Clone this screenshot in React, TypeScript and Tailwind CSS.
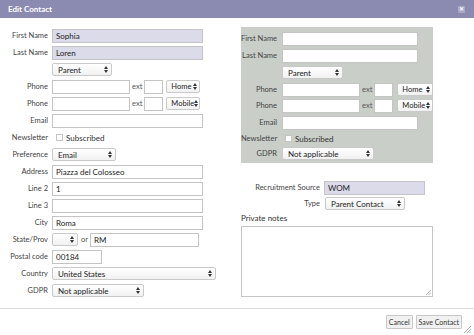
import React from "react";

const font = { fontFamily: "Lato, 'Open Sans', sans-serif" };

function Arrows() {
  return (
    <svg width="4" height="7" viewBox="0 0 4 7" className="shrink-0">
      <path d="M0 3 L2 0 L4 3 Z" fill="#333" />
      <path d="M0 4 L2 7 L4 4 Z" fill="#333" />
    </svg>
  );
}

function Input({ w, value, filled }: { w: string; value?: string; filled?: boolean }) {
  return (
    <div
      className={`${w} h-[14px] border border-[#c4c4c4] flex items-center px-[3px] text-[8px] text-[#222] shrink-0 ${
        filled ? "bg-[#dcdbea]" : "bg-white"
      }`}
    >
      {value}
    </div>
  );
}

function Select({ w, value, pad }: { w: string; value?: string; pad?: string }) {
  return (
    <div
      className={`${w} h-[13px] border border-[#c9c9c9] rounded-[2px] bg-gradient-to-b from-white to-[#f1f1f1] flex items-center justify-between ${
        pad ?? "pl-[5px] pr-[3px] text-[8px]"
      } text-[#222] shrink-0 overflow-hidden`}
    >
      <span className="whitespace-nowrap">{value}</span>
      <Arrows />
    </div>
  );
}

function Row({ label, lw, gap, children }: { label: string; lw: string; gap: string; children?: React.ReactNode }) {
  return (
    <div className={`h-[17px] flex items-center ${gap}`}>
      <div className={`${lw} text-right text-[7.5px] text-[#444] whitespace-nowrap shrink-0`}>{label}</div>
      {children}
    </div>
  );
}

function Phone({ type, iw, sw, sm }: { type: string; iw: string; sw: string; sm: string }) {
  return (
    <div className="flex items-center">
      <Input w={iw} />
      <span className="text-[7.5px] text-[#555] ml-[2px] mr-[2px]">ext</span>
      <Input w="w-[19px]" />
      <div className={sm}>
        <Select w={sw} value={type} pad="pl-[4px] pr-[2px] text-[7.5px]" />
      </div>
    </div>
  );
}

function Check() {
  return (
    <div className="flex items-center gap-[3px] ml-[4px]">
      <div className="w-[7px] h-[7px] border border-[#c4c4c4] bg-white" />
      <span className="text-[8px] text-[#333]">Subscribed</span>
    </div>
  );
}

export default function App() {
  const L = "w-[48px]";
  const G = "gap-[4px]";
  const RL = "w-[36px]";
  const RG = "gap-[5px]";
  return (
    <div className="w-[474px] h-[335px] bg-white relative overflow-hidden" style={font}>
      <div className="h-[18px] bg-[#8b8bb1] flex items-center justify-between pl-[8px] pr-[9px]">
        <span className="text-white text-[8px] font-bold">Edit Contact</span>
        <span className="w-[7px] h-[7px] bg-[#a9a9c6] flex items-center justify-center text-white text-[6px] font-bold leading-none">✕</span>
      </div>
      <div className="flex h-[290px]">
        <div className="w-[241px] pt-[9px] shrink-0">
          <Row label="First Name" lw={L} gap={G}>
            <Input w="w-[151px]" value="Sophia" filled />
          </Row>
          <Row label="Last Name" lw={L} gap={G}>
            <Input w="w-[151px]" value="Loren" filled />
          </Row>
          <Row label="" lw={L} gap={G}>
            <Select w="w-[60px]" value="Parent" />
          </Row>
          <Row label="Phone" lw={L} gap={G}>
            <Phone type="Home" iw="w-[78px]" sw="w-[34px]" sm="ml-[3px]" />
          </Row>
          <Row label="Phone" lw={L} gap={G}>
            <Phone type="Mobile" iw="w-[78px]" sw="w-[34px]" sm="ml-[3px]" />
          </Row>
          <Row label="Email" lw={L} gap={G}>
            <Input w="w-[151px]" />
          </Row>
          <Row label="Newsletter" lw={L} gap={G}>
            <Check />
          </Row>
          <Row label="Preference" lw={L} gap={G}>
            <Select w="w-[64px]" value="Email" />
          </Row>
          <Row label="Address" lw={L} gap={G}>
            <Input w="w-[151px]" value="Piazza del Colosseo" />
          </Row>
          <Row label="Line 2" lw={L} gap={G}>
            <Input w="w-[151px]" value="1" />
          </Row>
          <Row label="Line 3" lw={L} gap={G}>
            <Input w="w-[151px]" />
          </Row>
          <Row label="City" lw={L} gap={G}>
            <Input w="w-[151px]" value="Roma" />
          </Row>
          <Row label="State/Prov" lw={L} gap={G}>
            <div className="flex items-center">
              <Select w="w-[26px]" value="" />
              <span className="text-[7.5px] text-[#555] ml-[3px] mr-[2px]">or</span>
              <Input w="w-[109px]" value="RM" />
            </div>
          </Row>
          <Row label="Postal code" lw={L} gap={G}>
            <Input w="w-[50px]" value="00184" />
          </Row>
          <Row label="Country" lw={L} gap={G}>
            <Select w="w-[164px]" value="United States" />
          </Row>
          <Row label="GDPR" lw={L} gap={G}>
            <Select w="w-[92px]" value="Not applicable" />
          </Row>
        </div>
        <div className="w-[192px] pt-[9px] shrink-0">
          <div className="bg-[#c9cec9] pt-[3px] pb-[2px]">
            <Row label="First Name" lw={RL} gap={RG}>
              <Input w="w-[136px]" />
            </Row>
            <Row label="Last Name" lw={RL} gap={RG}>
              <Input w="w-[136px]" />
            </Row>
            <Row label="" lw={RL} gap={RG}>
              <Select w="w-[61px]" value="Parent" />
            </Row>
            <Row label="Phone" lw={RL} gap={RG}>
              <Phone type="Home" iw="w-[78px]" sw="w-[36px]" sm="ml-[4px]" />
            </Row>
            <div className="-mt-[1px]">
              <Row label="Phone" lw={RL} gap={RG}>
                <Phone type="Mobile" iw="w-[78px]" sw="w-[36px]" sm="ml-[4px]" />
              </Row>
            </div>
            <Row label="Email" lw={RL} gap={RG}>
              <Input w="w-[136px]" />
            </Row>
            <div className="h-[15px] flex items-center gap-[5px]">
              <div className="w-[36px] text-right text-[7.5px] text-[#444] shrink-0">Newsletter</div>
              <div className="-ml-[1px]">
                <Check />
              </div>
            </div>
            <div className="h-[15px] flex items-center gap-[5px]">
              <div className="w-[36px] text-right text-[7.5px] text-[#444] shrink-0">GDPR</div>
              <Select w="w-[92px]" value="Not applicable" />
            </div>
          </div>
          <div className="mt-[16px]">
            <Row label="Recruitment Source" lw="w-[79px]" gap={G}>
              <Input w="w-[101px]" value="WOM" filled />
            </Row>
            <div className="-mt-[1px]">
              <Row label="Type" lw="w-[79px]" gap="gap-[5px]">
                <Select w="w-[80px]" value="Parent Contact" />
              </Row>
            </div>
            <div className="text-[8px] text-[#333] mt-[1px] leading-[10px]">Private notes</div>
            <div className="mt-[3px] w-[192px] h-[71px] border border-[#c4c4c4] bg-white relative">
              <svg width="5" height="5" viewBox="0 0 5 5" className="absolute right-[1px] bottom-[1px]">
                <path d="M5 0 L0 5 M5 2.5 L2.5 5" stroke="#999" strokeWidth="0.8" />
              </svg>
            </div>
          </div>
        </div>
      </div>
      <div className="border-t border-[#dcdcdc]" />
      <div className="flex justify-end gap-[3px] pr-[12px] pt-[6px]">
        <div className="h-[14px] px-[2px] border border-[#c8c8c8] bg-[#f1f1f1] rounded-[1px] flex items-center text-[7px] text-[#333]">
          Cancel
        </div>
        <div className="h-[14px] px-[2px] border border-[#c8c8c8] bg-[#f1f1f1] rounded-[1px] flex items-center text-[7px] text-[#333]">
          Save Contact
        </div>
      </div>
      <svg width="7" height="7" viewBox="0 0 7 7" className="absolute right-[3px] bottom-[2px]">
        <path d="M7 0 L0 7 M7 3 L3 7 M7 5.5 L5.5 7" stroke="#999" strokeWidth="0.8" />
      </svg>
    </div>
  );
}
